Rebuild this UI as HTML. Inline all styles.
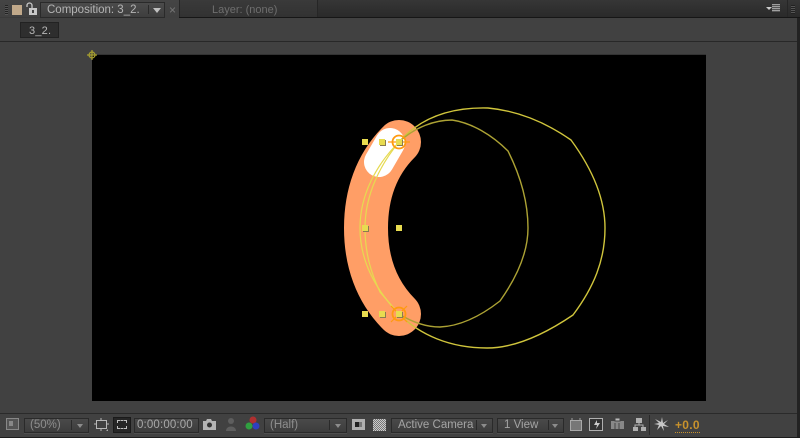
<!DOCTYPE html>
<html><head><meta charset="utf-8"><style>
html,body{margin:0;padding:0;background:#414141}
#r{position:relative;width:800px;height:438px;overflow:hidden;background:#414141;font-family:"Liberation Sans",sans-serif}
#r div{position:absolute;box-sizing:border-box}
.t{white-space:nowrap;color:#a0a0a0;font-size:11.5px;letter-spacing:0;line-height:14px;filter:blur(.3px)}
.dd{background:linear-gradient(#4a4a4a,#3c3c3c);border:1px solid #2a2a2a;box-shadow:0 1px 0 #4e4e4e;height:15px;top:418px}
.sep{width:1px;background:#2a2a2a;height:10px;top:420px}
.arr{width:0;height:0;border-left:3.5px solid transparent;border-right:3.5px solid transparent;border-top:4px solid #8c8c8c;top:424px}
svg{position:absolute;left:0;top:0}
</style></head><body><div id="r">
<div style="left:0;top:0;width:800px;height:17px;background:linear-gradient(#363636,#2a2a2a)"></div>
<div style="left:0;top:0;width:179px;height:18px;background:linear-gradient(#444,#404040)"></div>
<div style="left:179px;top:0;width:139px;height:17px;background:linear-gradient(#3a3a3a,#323232);border-left:1px solid #262626;border-right:1px solid #262626"></div>
<div style="left:179px;top:17px;width:621px;height:1px;background:#161616"></div>
<div style="left:0;top:17px;width:40px;height:1px;background:#3a3a3a"></div>
<div style="left:5px;top:5px;width:3px;height:10px;background:repeating-linear-gradient(#222 0 1px,#555 1px 2px)"></div>
<div style="left:12px;top:5px;width:10px;height:10px;background:#c1a98a"></div>
<div style="left:40px;top:2px;width:125px;height:16px;background:linear-gradient(#4c4c4c,#3e3e3e);border:1px solid #2a2a2a"></div>
<div class="t" style="left:47px;top:3px;color:#b4b4b4">Composition: 3_2.</div>
<div style="left:148px;top:5px;width:1px;height:9px;background:#2a2a2a"></div>
<div style="left:153px;top:8px;width:0;height:0;border-left:4px solid transparent;border-right:4px solid transparent;border-top:5px solid #c0c0c0"></div>
<div style="left:169px;top:3px;color:#777;font-size:12px;line-height:14px">×</div>
<div class="t" style="left:212px;top:3px;color:#6e6e6e;font-size:11px">Layer: (none)</div>
<div style="left:772px;top:4px;width:8px;height:8px;background:repeating-linear-gradient(#a0a0a0 0 1px,#555 1px 2px)"></div>
<div style="left:766px;top:7px;width:0;height:0;border-left:3px solid transparent;border-right:3px solid transparent;border-top:3px solid #ccc"></div>
<div style="left:787px;top:0;width:1px;height:17px;background:#262626"></div>
<div style="left:791px;top:5px;width:4px;height:9px;background:repeating-linear-gradient(#222 0 1px,#555 1px 2px)"></div>
<div style="left:20px;top:22px;width:39px;height:16px;background:#2e2e2e;border:1px solid #222"></div>
<div class="t" style="left:29px;top:24px;color:#b8b8b8;font-size:11px;letter-spacing:.2px">3_2.</div>
<div style="left:0;top:41px;width:797px;height:1px;background:#282828"></div>
<div style="left:92px;top:54px;width:614px;height:1px;background:#333"></div>
<div style="left:92px;top:55px;width:614px;height:346px;background:#000"></div>
<div style="left:797px;top:18px;width:3px;height:420px;background:#222"></div>
<svg width="800" height="438" viewBox="0 0 800 438" fill="none">
<path d="M27 6V4.5a2.5 2.5 0 0 1 5 0V8" stroke="#c8c8c8" stroke-width="1.3" transform="translate(0 1)"/>
<rect x="29" y="8" width="8" height="7" fill="#c8c8c8"/><rect x="32" y="10" width="2" height="3" fill="#444"/>
<g stroke="#a8a030" stroke-width="1.2"><circle cx="92" cy="55" r="3"/><path d="M87 55h10M92 50v10"/></g>
<path d="M399 142C376 165 366 195 366 228C366 261 376 291 399 314" stroke="#ff9e66" stroke-width="44" stroke-linecap="round"/>
<path d="M390 143L379 162" stroke="#fff" stroke-width="30" stroke-linecap="round"/>
<g stroke="#e6da50" stroke-width="1.2">
<path d="M399 142C376 165 360 195 360 228C360 260 374 288 399 314"/>
<path d="M399 142C380 165 365 195 365 228C365 255 372 275 380 292L399 314"/>
</g>
<g stroke="#d0c53c" stroke-width="1.4">
<path d="M399 142C420 118 450 107 488 108C520 111 548 124 571 140C593 170 605 200 605 228C605 260 594 287 573 315C545 334 515 348 487 348C450 348 420 335 399 314"/>
</g>
<g stroke="#aca234" stroke-width="1.4">
<path d="M399 142C415 127 435 120 452 120C472 123 492 135 508 151C520 175 528 200 528 228C528 252 517 277 500 301C482 315 462 326 440 327C425 327 412 322 399 314"/>
</g>
<g stroke="#ff9a10" stroke-width="1.8">
<circle cx="399" cy="142" r="6.500"/><path d="M388 142h22" stroke-width="1.300"/>
<circle cx="399" cy="314" r="6.500"/><path d="M391 322l16-16M391 306l16 16" stroke-width="1.200"/>
</g>
<g fill="#8a7c50"><rect x="380" y="140" width="6" height="6"/><rect x="397" y="140" width="6" height="6"/><rect x="363" y="226" width="6" height="6"/><rect x="380" y="312" width="6" height="6"/><rect x="397" y="312" width="6" height="6"/></g>
<g fill="#e8dc50"><rect x="362" y="139" width="6" height="6"/><rect x="379" y="139" width="6" height="6"/><rect x="396" y="139" width="6" height="6"/><rect x="362" y="225" width="6" height="6"/><rect x="396" y="225" width="6" height="6"/><rect x="362" y="311" width="6" height="6"/><rect x="379" y="311" width="6" height="6"/><rect x="396" y="311" width="6" height="6"/></g>
</svg>
<div style="left:0;top:413px;width:797px;height:1px;background:#2a2a2a"></div>
<div style="left:0;top:437px;width:800px;height:1px;background:#1c1c1c"></div>
<div style="left:6px;top:418px;width:13px;height:12px;border:1px solid #888;background:#555"></div>
<div style="left:9px;top:421px;width:4px;height:5px;background:#888"></div>
<div class="dd" style="left:24px;width:65px"></div><div class="t" style="left:30px;top:418px;color:#8e8e8e">(50%)</div><div class="sep" style="left:71px"></div><div class="arr" style="left:77px"></div>
<div style="left:113px;top:417px;width:18px;height:16px;background:#262626;border:1px solid #1a1a1a"></div>
<div style="left:117px;top:420px;width:10px;height:9px;border:1px dashed #c0c0c0"></div>
<div class="dd" style="left:134px;width:65px"></div><div class="t" style="left:137px;top:418px;color:#a8a8a8;letter-spacing:.15px">0:00:00:00</div>
<div class="dd" style="left:264px;width:83px"></div><div class="t" style="left:270px;top:418px;color:#8e8e8e">(Half)</div><div class="sep" style="left:329px"></div><div class="arr" style="left:335px"></div>
<div style="left:352px;top:419px;width:13px;height:11px;background:#b0b0b0"></div><div style="left:355px;top:422px;width:7px;height:5px;background:#222;border-right:3px solid #777"></div>
<div style="left:373px;top:419px;width:13px;height:12px;background:repeating-conic-gradient(#ccc 0 25%,#777 0 50%) 0 0/2px 2px"></div>
<div class="dd" style="left:391px;width:102px"></div><div class="t" style="left:398px;top:418px;color:#a4a4a4">Active Camera</div><div class="sep" style="left:476px"></div><div class="arr" style="left:481px"></div>
<div class="dd" style="left:497px;width:67px"></div><div class="t" style="left:504px;top:418px;color:#a4a4a4">1 View</div><div class="sep" style="left:548px"></div><div class="arr" style="left:552px"></div>
<div style="left:649px;top:415px;width:1px;height:20px;background:#2a2a2a"></div>
<div class="t" style="left:675px;top:418px;color:#c8922c;font-size:12px;font-weight:bold;letter-spacing:.3px;border-bottom:1px dotted #c8922c">+0.0</div>
<svg width="800" height="438" viewBox="0 0 800 438" fill="none">
<rect x="96.500" y="420.500" width="10" height="8" stroke="#b8b8b8"/><path d="M94 424h2M107 424h2M101 418v2M101 429v2" stroke="#b8b8b8"/><path d="M106 431h2v-2z" fill="#aaa"/>
<path d="M203 421h3l1-2h4l1 2h4v9h-13z" fill="#b4b4b4"/><circle cx="209.500" cy="425" r="2.500" fill="#333"/>
<circle cx="231" cy="421" r="3" fill="#5e5e5e"/><path d="M226 431c0-6 10-6 10 0z" fill="#5e5e5e"/>
<circle cx="253" cy="420" r="3.500" fill="#b03030"/><circle cx="249" cy="426" r="3.500" fill="#30a040"/><circle cx="256" cy="426" r="3.500" fill="#3040c0"/>
<path d="M572 418v2M580 418v2" stroke="#a0a0a0"/><rect x="570.500" y="420.500" width="11" height="10" fill="#777" stroke="#a8a8a8"/>
<rect x="589.500" y="418.500" width="13" height="12" fill="#333" stroke="#b0b0b0"/><path d="M597 420l-3 5h3l-1 4 4-6h-3z" fill="#ccc"/>
<path d="M611 429v-8h13v8z" fill="#888"/><path d="M615 418h5v3h-5zM615 423v6M619 423v6" fill="#bbb" stroke="#444"/>
<path d="M636 418h6v5h-6zM633 427h5v4h-5zM641 427h5v4h-5z" fill="#b0b0b0"/><path d="M639 423v2M635 427v-2h8v2" stroke="#b0b0b0"/>
<circle cx="662" cy="425" r="2.500" fill="#333"/>
<path d="M655 419l6 3 1-5 1 6 5-3-4 4 5 3-6-1 1 5-3-5-4 4 2-5-5-1 5-1z" fill="#c8c8c8"/>
</svg>
</div></body></html>
